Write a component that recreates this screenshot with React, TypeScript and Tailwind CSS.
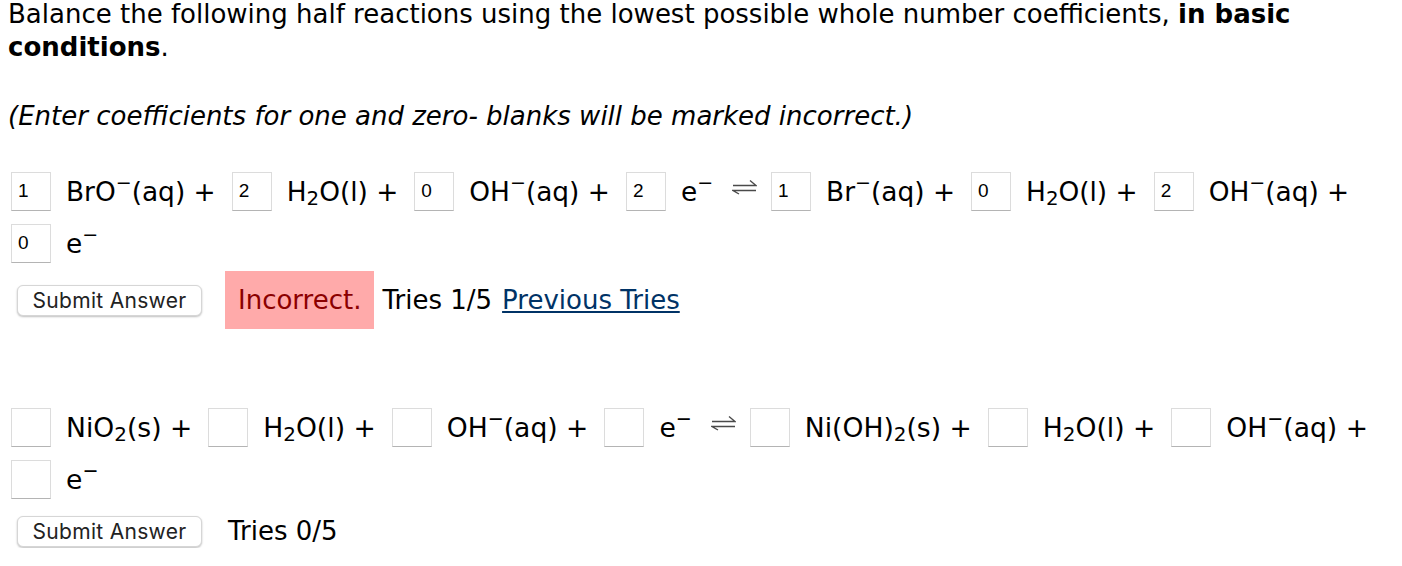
import React from "react";

const body = "font-['DejaVu_Sans',Verdana,sans-serif]";

function Coef({ value }: { value?: string }) {
  return (
    <input
      readOnly
      value={value ?? ""}
      className="ml-[3px] h-[39px] w-[40px] shrink-0 border border-[#dcdcdc] border-b-[#b4b4b4] bg-white pl-[6px] font-['Liberation_Sans',Arial,sans-serif] text-[19px] text-black outline-none"
    />
  );
}

function Sup({ children }: { children: React.ReactNode }) {
  return <sup className="top-[-0.62em] text-[0.72em]">{children}</sup>;
}

function Term({ value, children }: { value?: string; children: React.ReactNode }) {
  return (
    <>
      <Coef value={value} />
      <span className="ml-[15px] mr-[13px] whitespace-nowrap">{children}</span>
    </>
  );
}

function Arrow() {
  return (
    <svg width="25" height="16" viewBox="0 0 25 16" className="ml-[6px] mr-[11px] -mt-[8px] shrink-0">
      <path d="M1 6.5H24L18 1.5" fill="none" stroke="#4a4a4a" strokeWidth="1.4" />
      <path d="M24 11.5H1L7 15" fill="none" stroke="#4a4a4a" strokeWidth="1.4" />
    </svg>
  );
}

const minus = "\u2212";

function SubmitButton() {
  return (
    <button className="ml-[9px] h-[31px] w-[185px] rounded-[6px] border border-[#d6d6d6] bg-white font-['Inter',sans-serif] text-[21px] leading-none tracking-[0.3px] text-[#222] shadow-[0_1px_2px_rgba(0,0,0,0.25)]">
      Submit Answer
    </button>
  );
}

export default function App() {
  return (
    <div className={`${body} px-[8px] text-[26px] leading-[33px] text-black`}>
      <p className="-mt-[2px]">
        Balance the following half reactions using the lowest possible whole number coefficients, <b>in basic conditions</b>.
      </p>
      <p className="mt-[36px] italic">(Enter coefficients for one and zero- blanks will be marked incorrect.)</p>

      {/* Reaction 1 */}
      <div className="mt-[38px] flex h-[40px] items-center text-[26.4px]">
        <Term value="1">BrO<Sup>{minus}</Sup>(aq) +</Term>
        <Term value="2">H<sub>2</sub>O(l) +</Term>
        <Term value="0">OH<Sup>{minus}</Sup>(aq) +</Term>
        <Term value="2">e<Sup>{minus}</Sup></Term>
        <Arrow />
        <Term value="1">Br<Sup>{minus}</Sup>(aq) +</Term>
        <Term value="0">H<sub>2</sub>O(l) +</Term>
        <Term value="2">OH<Sup>{minus}</Sup>(aq) +</Term>
      </div>
      <div className="mt-[12px] flex h-[40px] items-center text-[26.4px]">
        <Term value="0">e<Sup>{minus}</Sup></Term>
      </div>
      <div className="mt-[8px] flex items-center">
        <SubmitButton />
        <span className="ml-[23px] flex h-[58px] items-center bg-[#ffaaaa] px-[13px] text-[#8b0000]">Incorrect.</span>
        <span className="ml-[8px]">Tries 1/5 </span>
        <a href="#" className="ml-[10px] text-[#003366] underline">Previous Tries</a>
      </div>

      {/* Reaction 2 */}
      <div className="mt-[78px] flex h-[40px] items-center text-[26.6px]">
        <Term>NiO<sub>2</sub>(s) +</Term>
        <Term>H<sub>2</sub>O(l) +</Term>
        <Term>OH<Sup>{minus}</Sup>(aq) +</Term>
        <Term>e<Sup>{minus}</Sup></Term>
        <Arrow />
        <Term>Ni(OH)<sub>2</sub>(s) +</Term>
        <Term>H<sub>2</sub>O(l) +</Term>
        <Term>OH<Sup>{minus}</Sup>(aq) +</Term>
      </div>
      <div className="mt-[12px] flex h-[40px] items-center text-[26.6px]">
        <Term>e<Sup>{minus}</Sup></Term>
      </div>
      <div className="mt-[16px] flex items-center">
        <SubmitButton />
        <span className="ml-[26px]">Tries 0/5</span>
      </div>
    </div>
  );
}
